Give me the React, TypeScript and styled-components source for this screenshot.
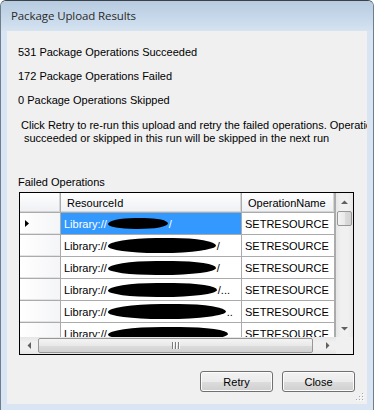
import React from 'react';
import styled, { createGlobalStyle } from 'styled-components';

const GlobalStyle = createGlobalStyle`
  html, body {
    margin: 0;
    padding: 0;
    background: #ffffff;
  }
  body {
    font-family: "Liberation Sans", Arial, sans-serif;
    font-size: 11px;
    color: #000;
  }
`;

const Window = styled.div`
  width: 374px;
  height: 410px;
  box-sizing: border-box;
  display: flex;
  flex-direction: column;
  background: #d9e5f2;
  border: 1px solid #6f7d8c;
  border-top-color: #3c4148;
  border-bottom: none;
  border-radius: 6px 6px 0 0;
  overflow: hidden;
`;

const TitleBar = styled.div`
  height: 30px;
  flex: none;
  display: flex;
  align-items: center;
  padding: 0 0 2px 10px;
  box-sizing: border-box;
  background: linear-gradient(#b7cbe0, #c8d9eb 60%, #d6e3f1);
  font-family: "Open Sans", "Noto Sans", sans-serif;
  font-size: 11.5px;
  color: #2a2a2a;
  letter-spacing: -0.1px;
`;

const Client = styled.div`
  position: relative;
  flex: none;
  height: 373px;
  margin: 0 6px;
  background: #f0f0f0;
  display: flex;
  flex-direction: column;
  overflow: hidden;
`;

const Stats = styled.div`
  display: flex;
  flex-direction: column;
  gap: 11px;
  margin-top: 15px;
  padding-left: 11px;
`;

const Line = styled.div<{ $indent?: number }>`
  height: 13px;
  line-height: 13px;
  white-space: nowrap;
  padding-left: ${(p) => p.$indent ?? 0}px;
`;

const Note = styled.div`
  margin-top: 12px;
  padding-left: 14px;
`;

const SectionLabel = styled.div`
  margin-top: 31px;
  padding-left: 11px;
  height: 13px;
  line-height: 13px;
`;

const GridFrame = styled.div`
  margin: 3px 0 0 12px;
  width: 335px;
  height: 163px;
  box-sizing: border-box;
  border: 1px solid #000;
  display: grid;
  grid-template-columns: 316px 17px;
  grid-template-rows: 144px 17px;
  background: #ababab;
`;

const Table = styled.div`
  overflow: hidden;
  background: #ababab;
  display: flex;
  flex-direction: column;
`;

const Row = styled.div<{ $header?: boolean }>`
  display: grid;
  grid-template-columns: 40px 180px 92px;
  column-gap: 1px;
  flex: none;
  height: ${(p) => (p.$header ? 19 : 21)}px;
  margin-bottom: 1px;
`;

const HeadCell = styled.div<{ $pad?: number }>`
  background: linear-gradient(#ffffff, #f6f7f9 50%, #eef0f3);
  box-shadow: inset -1px 0 0 #d5d5d5, inset 0 -1px 0 #d5d5d5;
  display: flex;
  align-items: center;
  padding-left: ${(p) => p.$pad ?? 0}px;
  white-space: nowrap;
`;

const RowHead = styled.div`
  background: linear-gradient(90deg, #ffffff, #f4f5f7);
  box-shadow: inset 0 -1px 0 #e3e3e3;
  display: flex;
  align-items: center;
  padding-left: 5px;
`;

const Cell = styled.div<{ $selected?: boolean }>`
  background: ${(p) => (p.$selected ? '#3399ff' : '#ffffff')};
  color: ${(p) => (p.$selected ? '#ffffff' : '#000000')};
  display: flex;
  align-items: center;
  padding-left: 3px;
  white-space: nowrap;
  overflow: hidden;
`;

const Redacted = styled.span<{ $w: number; $h: number }>`
  display: inline-block;
  flex: none;
  width: ${(p) => p.$w}px;
  height: ${(p) => p.$h}px;
  margin: 0 1px 0 1px;
  background: #000;
  border-radius: 45% 40% 50% 45% / 55% 50% 50% 45%;
`;

const ScrollBar = styled.div<{ $vertical?: boolean }>`
  display: flex;
  flex-direction: ${(p) => (p.$vertical ? 'column' : 'row')};
  background: linear-gradient(
    ${(p) => (p.$vertical ? '90deg' : '180deg')},
    #e6e6e6,
    #f0f0f0 30%,
    #f0f0f0 70%,
    #e6e6e6
  );
`;

const ArrowBtn = styled.div`
  flex: none;
  width: 17px;
  height: 17px;
  display: flex;
  align-items: center;
  justify-content: center;
`;

const Track = styled.div<{ $vertical?: boolean }>`
  flex: 1;
  display: flex;
  flex-direction: ${(p) => (p.$vertical ? 'column' : 'row')};
  padding: ${(p) => (p.$vertical ? '1px 1px' : '1px 1px')};
`;

const Thumb = styled.div<{ $vertical?: boolean; $len: number }>`
  flex: none;
  box-sizing: border-box;
  ${(p) => (p.$vertical ? `height: ${p.$len}px;` : `width: ${p.$len}px;`)}
  border: 1px solid #979797;
  border-radius: 2px;
  background: linear-gradient(
    ${(p) => (p.$vertical ? '90deg' : '180deg')},
    #f4f4f4,
    #e9e9e9 50%,
    #dcdcdc 51%,
    #d2d2d2
  );
  display: flex;
  align-items: center;
  justify-content: center;
  gap: 2px;
`;

const GripLine = styled.span`
  width: 1px;
  height: 7px;
  background: #7a7a7a;
  box-shadow: 1px 0 0 #fafafa;
`;

const Corner = styled.div`
  background: #f0f0f0;
`;

const Buttons = styled.div`
  display: flex;
  justify-content: flex-end;
  gap: 9px;
  margin-top: 16px;
  padding-right: 12px;
`;

const Button = styled.button`
  width: 73px;
  height: 21px;
  box-sizing: border-box;
  padding: 0;
  border: 1px solid #707070;
  border-radius: 3px;
  background: linear-gradient(#f2f2f2, #ebebeb 50%, #dddddd 51%, #cfcfcf);
  box-shadow: inset 0 0 0 1px #fcfcfc;
  font-family: "Liberation Sans", Arial, sans-serif;
  font-size: 11px;
  color: #000;
`;

const Grip = styled.svg`
  position: absolute;
  right: 2px;
  bottom: 2px;
`;

const Arrow = ({ dir }: { dir: 'up' | 'down' | 'left' | 'right' }) => {
  const pts = {
    up: '0,4 7,4 3.5,0.5',
    down: '0,0 7,0 3.5,3.5',
    left: '4,0 4,7 0.5,3.5',
    right: '0,0 0,7 3.5,3.5',
  }[dir];
  const vert = dir === 'up' || dir === 'down';
  return (
    <svg width={vert ? 7 : 4} height={vert ? 4 : 7}>
      <polygon points={pts} fill="#606060" />
    </svg>
  );
};

const rows = [
  { w: 60, h: 11, suffix: '/' },
  { w: 108, h: 15, suffix: '/' },
  { w: 108, h: 14, suffix: '/' },
  { w: 109, h: 14, suffix: '/...' },
  { w: 118, h: 15, suffix: '..' },
  { w: 120, h: 14, suffix: '' },
];

export default function App() {
  return (
    <>
      <GlobalStyle />
      <Window>
        <TitleBar>Package Upload Results</TitleBar>
        <Client>
          <Stats>
            <Line>531 Package Operations Succeeded</Line>
            <Line>172 Package Operations Failed</Line>
            <Line>0 Package Operations Skipped</Line>
          </Stats>
          <Note>
            <Line>
              Click Retry to re-run this upload and retry the failed operations. Operations that
            </Line>
            <Line $indent={3}>succeeded or skipped in this run will be skipped in the next run</Line>
          </Note>
          <SectionLabel>Failed Operations</SectionLabel>
          <GridFrame>
            <Table>
              <Row $header>
                <HeadCell />
                <HeadCell $pad={6}>ResourceId</HeadCell>
                <HeadCell $pad={6}>OperationName</HeadCell>
              </Row>
              {rows.map((r, i) => (
                <Row key={i}>
                  <RowHead>
                    {i === 0 && (
                      <svg width="4" height="7">
                        <polygon points="0,0 0,7 4,3.5" fill="#000" />
                      </svg>
                    )}
                  </RowHead>
                  <Cell $selected={i === 0}>
                    Library://
                    <Redacted $w={r.w} $h={r.h} />
                    {r.suffix}
                  </Cell>
                  <Cell>SETRESOURCE</Cell>
                </Row>
              ))}
            </Table>
            <ScrollBar $vertical>
              <ArrowBtn>
                <Arrow dir="up" />
              </ArrowBtn>
              <Track $vertical>
                <Thumb $vertical $len={15} />
              </Track>
              <ArrowBtn>
                <Arrow dir="down" />
              </ArrowBtn>
            </ScrollBar>
            <ScrollBar>
              <ArrowBtn>
                <Arrow dir="left" />
              </ArrowBtn>
              <Track>
                <Thumb $len={275}>
                  <GripLine />
                  <GripLine />
                  <GripLine />
                </Thumb>
              </Track>
              <ArrowBtn>
                <Arrow dir="right" />
              </ArrowBtn>
            </ScrollBar>
            <Corner />
          </GridFrame>
          <Buttons>
            <Button type="button">Retry</Button>
            <Button type="button">Close</Button>
          </Buttons>
          <Grip width="10" height="10">
            {[
              [8, 2],
              [8, 5],
              [5, 5],
              [8, 8],
              [5, 8],
              [2, 8],
            ].map(([x, y], i) => (
              <g key={i}>
                <rect x={x} y={y} width="1" height="1" fill="#ffffff" />
                <rect x={x - 1} y={y - 1} width="1" height="1" fill="#a0a7b0" />
              </g>
            ))}
          </Grip>
        </Client>
      </Window>
    </>
  );
}
